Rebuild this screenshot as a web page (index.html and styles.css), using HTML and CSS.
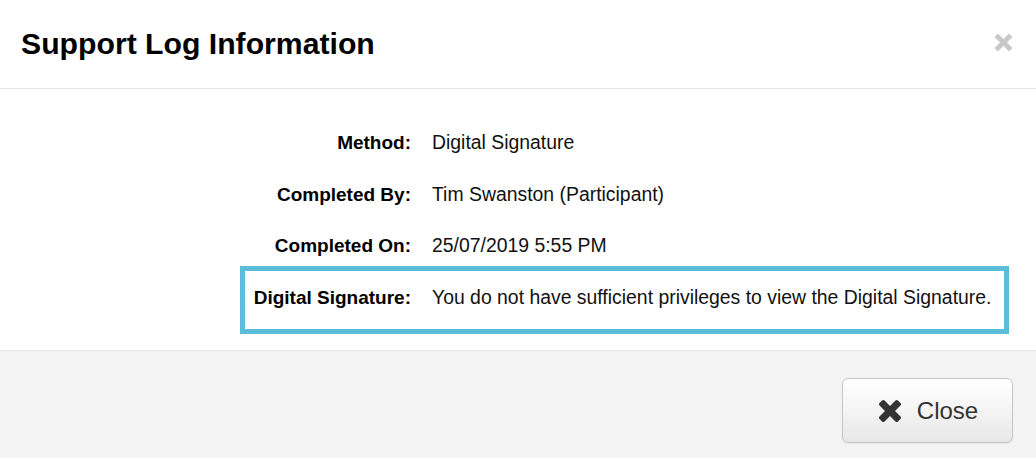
FILE: index.html
```html
<!DOCTYPE html>
<html>
<head>
<meta charset="utf-8">
<link rel="stylesheet" href="styles.css">
</head>
<body>
<div class="modal">
  <header class="modal-header">
    <h1 class="modal-title">Support Log Information</h1>
    <button class="close" aria-label="Close">
      <svg viewBox="0 0 19 19" width="19" height="19"><path d="M2.2 2.2L16.8 16.8M16.8 2.2L2.2 16.8" stroke="#c8c8c8" stroke-width="4.8" fill="none"/></svg>
    </button>
  </header>
  <section class="modal-body">
    <dl class="info">
      <div class="row">
        <dt>Method:</dt>
        <dd>Digital Signature</dd>
      </div>
      <div class="row">
        <dt>Completed By:</dt>
        <dd>Tim Swanston (Participant)</dd>
      </div>
      <div class="row">
        <dt>Completed On:</dt>
        <dd>25/07/2019 5:55 PM</dd>
      </div>
      <div class="row highlight">
        <dt>Digital Signature:</dt>
        <dd>You do not have sufficient privileges to view the Digital Signature.</dd>
      </div>
    </dl>
  </section>
  <footer class="modal-footer">
    <button class="btn">
      <svg class="btn-icon" viewBox="110 366 1188 1188" width="22" height="22"><path fill="#333" d="M1298 1322q0 40-28 68l-136 136q-28 28-68 28t-68-28l-294-294-294 294q-28 28-68 28t-68-28l-136-136q-28-28-28-68t28-68l294-294-294-294q-28-28-28-68t28-68l136-136q28-28 68-28t68 28l294 294 294-294q28-28 68-28t68 28l136 136q28 28 28 68t-28 68l-294 294 294 294q28 28 28 68z"/></svg>
      <span>Close</span>
    </button>
  </footer>
</div>
</body>
</html>
```

FILE: styles.css
```css
html, body {
  margin: 0;
  padding: 0;
  background: #ffffff;
}

body {
  font-family: "Liberation Sans", Arial, Helvetica, sans-serif;
  color: #000;
}

.modal {
  width: 1036px;
  min-height: 458px;
  display: flex;
  flex-direction: column;
}

.modal-header {
  height: 88px;
  border-bottom: 1px solid #e5e5e5;
  display: flex;
  align-items: center;
  justify-content: space-between;
  padding: 0 23px 0 21px;
}

.modal-title {
  margin: 0;
  font-size: 30.2px;
  line-height: 33px;
  font-weight: bold;
  color: #000;
  padding-bottom: 1px;
}

.close {
  border: 0;
  background: none;
  padding: 0;
  width: 19px;
  height: 19px;
  display: flex;
  margin-top: -3px;
  cursor: pointer;
}

.modal-body {
  padding: 28px 0 16px 240px;
  border-bottom: 1px solid #e5e5e5;
}

.info {
  margin: 0;
  width: 769px;
}

.row {
  display: grid;
  grid-template-columns: 166px 1fr;
  column-gap: 21px;
  border: 5px solid transparent;
  padding: 10px 0;
  font-size: 19px;
  line-height: 21.5px;
}

.row dt {
  text-align: right;
  font-weight: bold;
}

.row dd {
  margin: 0;
  color: #111;
  font-size: 19.4px;
}

.row.highlight {
  border-color: #5bbdd7;
  margin-top: -6px;
  padding: 16px 0 21px;
}

.modal-footer {
  flex: 1;
  background: #f3f3f3;
  display: flex;
  justify-content: flex-end;
  align-items: flex-start;
  padding: 27px 23px 0 0;
}

.btn {
  width: 171px;
  height: 65px;
  border: 1px solid #c6c6c6;
  border-radius: 6px;
  background: linear-gradient(to bottom, #ffffff 0%, #f4f4f4 50%, #e7e7e7 100%);
  box-shadow: 0 1px 1px rgba(0,0,0,0.06);
  display: flex;
  align-items: center;
  justify-content: center;
  gap: 16px;
  font-family: "Liberation Sans", Arial, Helvetica, sans-serif;
  font-size: 24px;
  color: #333;
  padding: 0 0 0 2px;
  cursor: pointer;
}

.btn-icon {
  display: block;
}
```
